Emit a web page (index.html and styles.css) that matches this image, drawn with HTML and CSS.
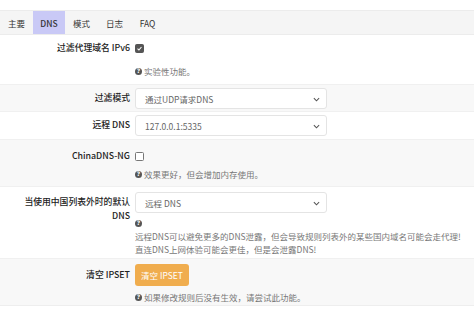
FILE: index.html
```html
<!DOCTYPE html>
<html lang="zh">
<head>
<meta charset="utf-8">
<link rel="stylesheet" href="styles.css">
</head>
<body>
<div class="page">
  <nav class="tabs">
    <span class="tab">主要</span>
    <span class="tab active">DNS</span>
    <span class="tab">模式</span>
    <span class="tab">日志</span>
    <span class="tab">FAQ</span>
  </nav>
  <div class="form">
    <div class="row r1">
      <div class="label">过滤代理域名 IPv6</div>
      <div class="value">
        <div class="line"><span class="cb checked"><svg viewBox="0 0 10 10" width="9" height="9"><path d="M2.2 5.2 L4.2 7.2 L7.8 2.8" fill="none" stroke="#fff" stroke-width="1.5"/></svg></span></div>
        <div class="help"><span class="q">?</span>实验性功能。</div>
      </div>
    </div>
    <div class="row r2 alt">
      <div class="label">过滤模式</div>
      <div class="value"><div class="select">通过UDP请求DNS<svg class="chev" viewBox="0 0 8 5" width="7" height="5"><path d="M1 1 L4 4 L7 1" fill="none" stroke="#555" stroke-width="1.2"/></svg></div></div>
    </div>
    <div class="row r3">
      <div class="label">远程 DNS</div>
      <div class="value"><div class="select">127.0.0.1:5335<svg class="chev" viewBox="0 0 8 5" width="7" height="5"><path d="M1 1 L4 4 L7 1" fill="none" stroke="#555" stroke-width="1.2"/></svg></div></div>
    </div>
    <div class="row r4 alt">
      <div class="label">ChinaDNS-NG</div>
      <div class="value">
        <div class="line"><span class="cb"></span></div>
        <div class="help"><span class="q">?</span>效果更好，但会增加内存使用。</div>
      </div>
    </div>
    <div class="row r5">
      <div class="label">当使用中国列表外时的默认<br>DNS</div>
      <div class="value">
        <div class="select">远程 DNS<svg class="chev" viewBox="0 0 8 5" width="7" height="5"><path d="M1 1 L4 4 L7 1" fill="none" stroke="#555" stroke-width="1.2"/></svg></div>
        <div class="help long"><div class="qline"><span class="q">?</span></div>远程DNS可以避免更多的DNS泄露，但会导致规则列表外的某些国内域名可能会走代理!<br>直连DNS上网体验可能会更佳，但是会泄露DNS!</div>
      </div>
    </div>
    <div class="row r6 alt">
      <div class="label">清空 IPSET</div>
      <div class="value">
        <button class="btn">清空 IPSET</button>
        <div class="help"><span class="q">?</span>如果修改规则后没有生效，请尝试此功能。</div>
      </div>
    </div>
  </div>
</div>
</body>
</html>
```
FILE: styles.css
```css
* { box-sizing: border-box; }
html, body { margin: 0; padding: 0; background: #fff; }
body {
  font-family: "Noto Sans CJK SC", "Noto Sans", sans-serif;
  color: #333;
  width: 474px;
  height: 321px;
  overflow: hidden;
}
.page { padding-top: 10px; }
.tabs {
  display: flex;
  height: 25px;
  background: #f5f5f5;
  border-top: 1px solid #ececec;
  border-bottom: 1px solid #ececec;
}
.tab {
  display: flex;
  align-items: center;
  justify-content: center;
  width: 33px;
  font-size: 8.5px;
  color: #333;
}
.tab.active {
  background: #c9c9f6;
  width: 32px;
  font-weight: 500;
}
.form { border-bottom: 1px solid #eee; }
.row {
  display: grid;
  grid-template-columns: 130px 1fr;
  column-gap: 5px;
  border-top: 1px solid #f0f0f0;
}
.row.r1 { border-top: none; }
.alt { background: #f8f8f8; }
.label {
  text-align: right;
  font-size: 8.8px;
  line-height: 14px;
  color: #222;
  font-weight: 500;
}
.value { font-size: 8.5px; }
.line { height: 14px; display: flex; align-items: center; }
.cb {
  display: inline-flex;
  width: 9px;
  height: 9px;
  border: 1px solid #777;
  border-radius: 1.5px;
  background: #fff;
  align-items: center;
  justify-content: center;
}
.cb.checked { background: #555; border-color: #555; }
.cb svg { display: block; }
.help {
  color: #777;
  line-height: 14px;
  font-size: 8.5px;
  display: flex;
  align-items: center;
}
.help.long { display: block; line-height: 13px; }
.qline { height: 14px; display: flex; align-items: center; }
.q {
  display: inline-flex;
  width: 7px;
  height: 7px;
  border-radius: 50%;
  background: #555;
  color: #fff;
  font-size: 6px;
  font-weight: bold;
  font-family: "DejaVu Sans", sans-serif;
  align-items: center;
  justify-content: center;
  margin-right: 2px;
  line-height: 1;
}
.select {
  width: 192px;
  height: 21px;
  border: 1px solid #e4e4e4;
  border-radius: 3px;
  background: #fff;
  display: flex;
  align-items: center;
  padding-left: 9px;
  color: #666;
  font-size: 8.5px;
  position: relative;
}
.chev { position: absolute; right: 6px; top: 8px; }
.btn {
  font-family: inherit;
  width: 54px;
  height: 22px;
  border: none;
  border-radius: 3px;
  background: #f0ad4e;
  color: #fff;
  font-size: 8.5px;
  padding: 0;
  display: block;
}
.r1 { padding: 6px 0 6px; height: 49px; }
.r1 .help { margin-top: 9px; }
.r2 { padding: 3px 0; height: 27px; }
.r2 .label, .r3 .label { padding-top: 3px; }
.r3 { padding: 3px 0; height: 28px; }
.r4 { padding: 9px 0 6px; height: 47px; }
.r4 .help { margin-top: 4px; }
.r5 { padding: 5px 0 3px; height: 72px; }
.r5 .label { padding-top: 3px; }
.r5 .help { margin-top: 3px; }
.r6 { padding: 5px 0 2px; height: 47px; }
.r6 .label { padding-top: 4px; }
.r6 .help { margin-top: 4px; }
```
